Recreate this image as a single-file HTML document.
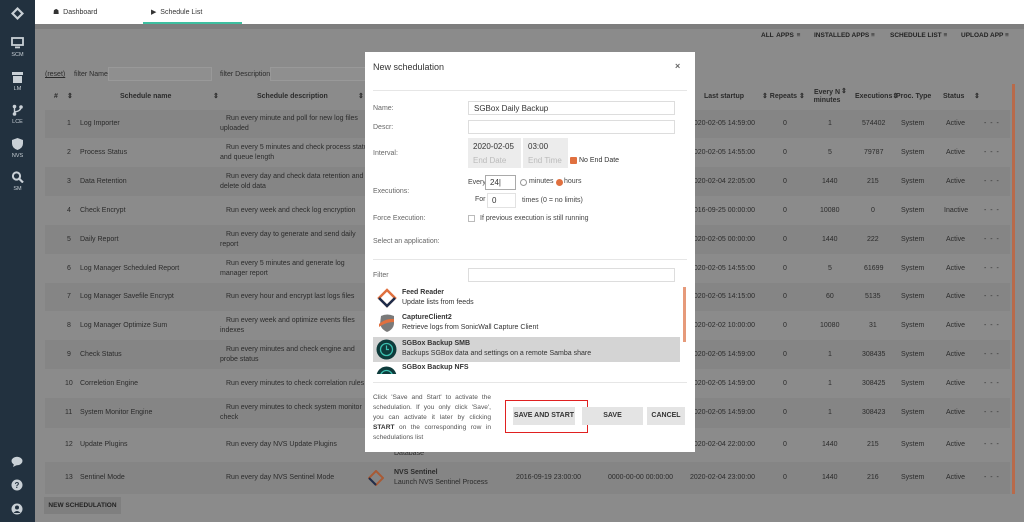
<!DOCTYPE html>
<html><head><meta charset="utf-8"><style>
*{box-sizing:border-box;margin:0;padding:0}
body{width:1024px;height:522px;overflow:hidden;position:relative;font-family:"Liberation Sans",sans-serif;font-size:7px;color:#2b2b2b;background:#8b8b8b}
.a{position:absolute}
.side{left:0;top:0;width:35px;height:522px;background:#22313f}
.si{position:absolute;left:0;width:35px;text-align:center;color:#c9d0d6;font-size:5.5px;line-height:7px}
.top{left:35px;top:0;width:989px;height:24px;background:#fff}
.row{position:absolute;left:45px;width:965px}
.c{position:absolute;top:50%;transform:translateY(-50%);line-height:10px}
.h{font-weight:bold}
.m{background:#fff;left:365px;top:52px;width:330px;height:400px;color:#555}
.lbl{position:absolute;left:8px;font-size:7px;color:#666}
.in{position:absolute;left:103px;width:207px;height:14px;border:1px solid #ddd;background:#fff;font-size:8px;color:#333;padding:2px 5px}
.btn{position:absolute;background:#e4e4e4;font-weight:bold;font-size:7px;color:#333;text-align:center;line-height:18px;height:18px}
</style></head><body>
<div class="a side">
 <svg class="a" style="left:10px;top:6px" width="15" height="15" viewBox="0 0 15 15"><path d="M7.5 1L14 7.5 7.5 14 1 7.5Z" fill="#c9d0d6"/><path d="M7.5 4L11 7.5 7.5 11 4 7.5Z" fill="#22313f"/></svg>
 <div class="si" style="top:37px"><svg width="13" height="12"><rect x="1" y="1" width="11" height="7" fill="none" stroke="#c9d0d6" stroke-width="1.8"/><rect x="4" y="9.5" width="5" height="1.8" fill="#c9d0d6"/></svg><br>SCM</div>
 <div class="si" style="top:71px"><svg width="13" height="12"><rect x="1" y="1" width="11" height="3" fill="#c9d0d6"/><rect x="2" y="5" width="9" height="7" fill="#c9d0d6"/></svg><br>LM</div>
 <div class="si" style="top:104px"><svg width="13" height="12"><circle cx="3.5" cy="2.5" r="1.8" fill="#c9d0d6"/><circle cx="3.5" cy="10" r="1.8" fill="#c9d0d6"/><circle cx="10" cy="3" r="1.8" fill="#c9d0d6"/><path d="M3.5 2.5V10M10 3Q10 7 3.5 8" stroke="#c9d0d6" fill="none" stroke-width="1.4"/></svg><br>LCE</div>
 <div class="si" style="top:138px"><svg width="13" height="12"><path d="M6.5 0L12 2V5.5Q12 10 6.5 12Q1 10 1 5.5V2Z" fill="#c9d0d6"/></svg><br>NVS</div>
 <div class="si" style="top:171px"><svg width="13" height="12"><circle cx="5.5" cy="5" r="3.6" fill="none" stroke="#c9d0d6" stroke-width="2"/><path d="M8 7.5L12 11.5" stroke="#c9d0d6" stroke-width="2.2"/></svg><br>SM</div>
 <svg class="a" style="left:11px;top:456px" width="12" height="11"><ellipse cx="6" cy="5" rx="5.5" ry="4.3" fill="#c9d0d6"/><path d="M3 8L2 11 6 9Z" fill="#c9d0d6"/></svg>
 <svg class="a" style="left:11px;top:479px" width="12" height="12"><circle cx="6" cy="6" r="5.5" fill="#c9d0d6"/><text x="6" y="9" font-size="8" font-weight="bold" text-anchor="middle" fill="#22313f" font-family="Liberation Sans">?</text></svg>
 <svg class="a" style="left:11px;top:503px" width="12" height="12"><circle cx="6" cy="6" r="5.5" fill="#c9d0d6"/><circle cx="6" cy="4.5" r="2" fill="#22313f"/><path d="M2.5 10Q6 6 9.5 10" fill="#22313f"/></svg>
</div>
<div class="a top">
 <div class="a" style="left:18px;top:8px;font-size:7px;color:#333">&#9751; &nbsp;Dashboard</div>
 <div class="a" style="left:116px;top:8px;font-size:7px;color:#333">&#9654; &nbsp;Schedule List</div>
 <div class="a" style="left:108px;top:22px;width:99px;height:2px;background:#3dbfa0"></div>
</div>
<div class="a" style="left:35px;top:24px;width:989px;height:5px;background:#7e7e7e"></div>
<div class="a h" style="top:32px;left:761px;font-size:6.5px;word-spacing:1px;color:#222">ALL APPS &#8801;</div>
<div class="a h" style="top:32px;left:814px;font-size:6.5px;color:#222">INSTALLED APPS &#8801;</div>
<div class="a h" style="top:32px;left:890px;font-size:6.5px;color:#222">SCHEDULE LIST &#8801;</div>
<div class="a h" style="top:32px;left:961px;font-size:6.5px;color:#222">UPLOAD APP &#8801;</div>
<div class="a" style="top:71px;left:45px;text-decoration:underline">(reset)</div>
<div class="a" style="top:71px;left:74px">filter Name</div>
<div class="a" style="top:67px;left:108px;width:104px;height:14px;background:#8f8f8f;border:1px solid #999"></div>
<div class="a" style="top:71px;left:220px">filter Description</div>
<div class="a" style="top:67px;left:270px;width:100px;height:14px;background:#8f8f8f;border:1px solid #999"></div>
<div class="a" style="left:1012px;top:84px;width:3px;height:410px;background:#b86a4a"></div>

<div class="row h" style="top:84px;height:26px">
 <div class="c" style="left:9px">#</div><div class="c" style="left:22px">&#8661;</div>
 <div class="c" style="left:75px">Schedule name</div><div class="c" style="left:168px">&#8661;</div>
 <div class="c" style="left:212px">Schedule description</div><div class="c" style="left:313px">&#8661;</div>
 <div class="c" style="left:659px">Last startup</div><div class="c" style="left:717px">&#8661; Repeats &#8661;</div>
 <div class="c" style="left:767px;text-align:center;width:30px;line-height:8px">Every N<br>minutes</div><div class="c" style="left:796px;top:30%">&#8661;</div>
 <div class="c" style="left:810px">Executions&#8661;</div><div class="c" style="left:851px">Proc. Type</div>
 <div class="c" style="left:898px">Status</div><div class="c" style="left:929px">&#8661;</div>
</div>
<!-- rows -->
<div class="row" style="top:110px;height:28px;background:#858585"><div class="c" style="left:22px">1</div><div class="c" style="left:35px">Log Importer</div><div class="c" style="left:175px;width:155px;text-indent:6px">Run every minute and poll for new log files uploaded</div><div class="c" style="left:645px">2020-02-05 14:59:00</div><div class="c" style="left:738px">0</div><div class="c" style="left:783px">1</div><div class="c" style="left:817px">574402</div><div class="c" style="left:856px">System</div><div class="c" style="left:901px">Active</div><div class="c" style="left:939px">- &nbsp;- &nbsp;-</div></div>
<div class="row" style="top:138px;height:29px"><div class="c" style="left:22px">2</div><div class="c" style="left:35px">Process Status</div><div class="c" style="left:175px;width:155px;text-indent:6px">Run every 5 minutes and check process status and queue length</div><div class="c" style="left:645px">2020-02-05 14:55:00</div><div class="c" style="left:738px">0</div><div class="c" style="left:783px">5</div><div class="c" style="left:819px">79787</div><div class="c" style="left:856px">System</div><div class="c" style="left:901px">Active</div><div class="c" style="left:939px">- &nbsp;- &nbsp;-</div></div>
<div class="row" style="top:167px;height:29px;background:#858585"><div class="c" style="left:22px">3</div><div class="c" style="left:35px">Data Retention</div><div class="c" style="left:175px;width:150px;text-indent:6px">Run every day and check data retention and delete old data</div><div class="c" style="left:645px">2020-02-04 22:05:00</div><div class="c" style="left:738px">0</div><div class="c" style="left:777px">1440</div><div class="c" style="left:822px">215</div><div class="c" style="left:856px">System</div><div class="c" style="left:901px">Active</div><div class="c" style="left:939px">- &nbsp;- &nbsp;-</div></div>
<div class="row" style="top:196px;height:29px"><div class="c" style="left:22px">4</div><div class="c" style="left:35px">Check Encrypt</div><div class="c" style="left:175px;width:150px;text-indent:6px">Run every week and check log encryption</div><div class="c" style="left:645px">2016-09-25 00:00:00</div><div class="c" style="left:738px">0</div><div class="c" style="left:775px">10080</div><div class="c" style="left:826px">0</div><div class="c" style="left:856px">System</div><div class="c" style="left:899px">Inactive</div><div class="c" style="left:939px">- &nbsp;- &nbsp;-</div></div>
<div class="row" style="top:225px;height:29px;background:#858585"><div class="c" style="left:22px">5</div><div class="c" style="left:35px">Daily Report</div><div class="c" style="left:175px;width:145px;text-indent:6px">Run every day to generate and send daily report</div><div class="c" style="left:645px">2020-02-05 00:00:00</div><div class="c" style="left:738px">0</div><div class="c" style="left:777px">1440</div><div class="c" style="left:822px">222</div><div class="c" style="left:856px">System</div><div class="c" style="left:901px">Active</div><div class="c" style="left:939px">- &nbsp;- &nbsp;-</div></div>
<div class="row" style="top:254px;height:29px"><div class="c" style="left:22px">6</div><div class="c" style="left:35px">Log Manager Scheduled Report</div><div class="c" style="left:175px;width:145px;text-indent:6px">Run every 5 minutes and generate log manager report</div><div class="c" style="left:645px">2020-02-05 14:55:00</div><div class="c" style="left:738px">0</div><div class="c" style="left:783px">5</div><div class="c" style="left:819px">61699</div><div class="c" style="left:856px">System</div><div class="c" style="left:901px">Active</div><div class="c" style="left:939px">- &nbsp;- &nbsp;-</div></div>
<div class="row" style="top:283px;height:28px;background:#858585"><div class="c" style="left:22px">7</div><div class="c" style="left:35px">Log Manager Savefile Encrypt</div><div class="c" style="left:175px;width:150px;text-indent:6px">Run every hour and encrypt last logs files</div><div class="c" style="left:645px">2020-02-05 14:15:00</div><div class="c" style="left:738px">0</div><div class="c" style="left:781px">60</div><div class="c" style="left:820px">5135</div><div class="c" style="left:856px">System</div><div class="c" style="left:901px">Active</div><div class="c" style="left:939px">- &nbsp;- &nbsp;-</div></div>
<div class="row" style="top:311px;height:29px"><div class="c" style="left:22px">8</div><div class="c" style="left:35px">Log Manager Optimize Sum</div><div class="c" style="left:175px;width:145px;text-indent:6px">Run every week and optimize events files indexes</div><div class="c" style="left:645px">2020-02-02 10:00:00</div><div class="c" style="left:738px">0</div><div class="c" style="left:775px">10080</div><div class="c" style="left:824px">31</div><div class="c" style="left:856px">System</div><div class="c" style="left:901px">Active</div><div class="c" style="left:939px">- &nbsp;- &nbsp;-</div></div>
<div class="row" style="top:340px;height:29px;background:#858585"><div class="c" style="left:22px">9</div><div class="c" style="left:35px">Check Status</div><div class="c" style="left:175px;width:145px;text-indent:6px">Run every minutes and check engine and probe status</div><div class="c" style="left:645px">2020-02-05 14:59:00</div><div class="c" style="left:738px">0</div><div class="c" style="left:783px">1</div><div class="c" style="left:817px">308435</div><div class="c" style="left:856px">System</div><div class="c" style="left:901px">Active</div><div class="c" style="left:939px">- &nbsp;- &nbsp;-</div></div>
<div class="row" style="top:369px;height:29px"><div class="c" style="left:20px">10</div><div class="c" style="left:35px">Correletion Engine</div><div class="c" style="left:175px;width:150px;text-indent:6px">Run every minutes to check correlation rules</div><div class="c" style="left:645px">2020-02-05 14:59:00</div><div class="c" style="left:738px">0</div><div class="c" style="left:783px">1</div><div class="c" style="left:817px">308425</div><div class="c" style="left:856px">System</div><div class="c" style="left:901px">Active</div><div class="c" style="left:939px">- &nbsp;- &nbsp;-</div></div>
<div class="row" style="top:398px;height:30px;background:#858585"><div class="c" style="left:20px">11</div><div class="c" style="left:35px">System Monitor Engine</div><div class="c" style="left:175px;width:145px;text-indent:6px">Run every minutes to check system monitor check</div><div class="c" style="left:645px">2020-02-05 14:59:00</div><div class="c" style="left:738px">0</div><div class="c" style="left:783px">1</div><div class="c" style="left:817px">308423</div><div class="c" style="left:856px">System</div><div class="c" style="left:901px">Active</div><div class="c" style="left:939px">- &nbsp;- &nbsp;-</div></div>
<div class="row" style="top:428px;height:34px"><div class="c" style="left:20px">12</div><div class="c" style="left:35px">Update Plugins</div><div class="c" style="left:181px">Run every day NVS Update Plugins</div><div class="c" style="left:349px;top:75%">Database</div><div class="c" style="left:645px">2020-02-04 22:00:00</div><div class="c" style="left:738px">0</div><div class="c" style="left:777px">1440</div><div class="c" style="left:822px">215</div><div class="c" style="left:856px">System</div><div class="c" style="left:901px">Active</div><div class="c" style="left:939px">- &nbsp;- &nbsp;-</div></div>
<div class="row" style="top:462px;height:32px;background:#858585"><div class="c" style="left:20px">13</div><div class="c" style="left:35px">Sentinel Mode</div><div class="c" style="left:181px">Run every day NVS Sentinel Mode</div>
 <svg class="c" style="left:323px" width="16" height="16" viewBox="0 0 16 16"><path d="M8 1L15 8 8 15 1 8Z" fill="none" stroke="#a85a35" stroke-width="2"/><path d="M1 8L8 15" stroke="#1f2d4b" stroke-width="2"/></svg>
 <div class="c" style="left:349px"><b>NVS Sentinel</b><br>Launch NVS Sentinel Process</div><div class="c" style="left:471px">2016-09-19 23:00:00</div><div class="c" style="left:563px">0000-00-00 00:00:00</div><div class="c" style="left:645px">2020-02-04 23:00:00</div><div class="c" style="left:738px">0</div><div class="c" style="left:777px">1440</div><div class="c" style="left:822px">216</div><div class="c" style="left:856px">System</div><div class="c" style="left:901px">Active</div><div class="c" style="left:939px">- &nbsp;- &nbsp;-</div></div>
<div class="a h" style="left:44px;top:497px;width:77px;height:17px;background:#7f7f7f;line-height:17px;text-align:center;font-size:6.5px;color:#222">NEW SCHEDULATION</div>

<!-- modal -->
<div class="a m">
 <div class="a" style="left:8px;top:10px;font-size:9px;color:#333">New schedulation</div>
 <div class="a" style="left:310px;top:9px;font-size:9px;color:#666;font-weight:bold">&times;</div>
 <div class="a" style="left:8px;top:38px;width:314px;height:1px;background:#e6e6e6"></div>
 <div class="lbl" style="top:53px">Name:</div><div class="in" style="top:49px">SGBox Daily Backup</div>
 <div class="lbl" style="top:72px">Descr:</div><div class="in" style="top:68px"></div>
 <div class="lbl" style="top:98px">Interval:</div>
 <div class="a" style="left:103px;top:86px;width:53px;height:30px;background:#ececec;font-size:8px;color:#333;padding:2px 5px;line-height:14px">2020-02-05<br><span style="color:#bbb">End Date</span></div>
 <div class="a" style="left:158px;top:86px;width:45px;height:30px;background:#ececec;font-size:8px;color:#333;padding:2px 5px;line-height:14px">03:00<br><span style="color:#bbb">End Time</span></div>
 <div class="a" style="left:205px;top:105px;width:7px;height:7px;background:#e0703f;border-radius:1px"></div>
 <div class="a" style="left:214px;top:105px;font-size:7px;color:#333">No End Date</div>
 <div class="lbl" style="top:136px">Executions:</div>
 <div class="a" style="left:103px;top:127px;font-size:7px;color:#444">Every</div>
 <div class="a" style="left:120px;top:123px;width:31px;height:15px;border:1px solid #aaa;font-size:8px;padding:2px 4px;color:#333">24|</div>
 <div class="a" style="left:155px;top:127px;width:7px;height:7px;border:1px solid #999;border-radius:50%"></div>
 <div class="a" style="left:164px;top:126px;font-size:7px;color:#444">minutes</div>
 <div class="a" style="left:191px;top:127px;width:7px;height:7px;background:#e0703f;border-radius:50%"></div>
 <div class="a" style="left:199px;top:126px;font-size:7px;color:#444">hours</div>
 <div class="a" style="left:110px;top:144px;font-size:7px;color:#444">For</div>
 <div class="a" style="left:122px;top:141px;width:29px;height:15px;border:1px solid #e2e2e2;font-size:8px;padding:2px 4px;color:#333">0</div>
 <div class="a" style="left:157px;top:145px;font-size:7px;color:#444">times (0 = no limits)</div>
 <div class="lbl" style="top:163px">Force Execution:</div>
 <div class="a" style="left:103px;top:163px;width:7px;height:7px;border:1px solid #bbb"></div>
 <div class="a" style="left:115px;top:163px;font-size:7px;color:#444">If previous execution is still running</div>
 <div class="lbl" style="top:186px">Select an application:</div>
 <div class="a" style="left:8px;top:207px;width:314px;height:1px;background:#e6e6e6"></div>
 <div class="lbl" style="top:220px">Filter</div><div class="in" style="top:216px;height:14px"></div>
 <div class="a" style="left:318px;top:235px;width:3px;height:55px;background:#e69a7a"></div>
 <svg class="a" style="left:12px;top:236px" width="20" height="20" viewBox="0 0 20 20"><path d="M10 2L18 10 10 18 2 10Z" fill="none" stroke="#e0703f" stroke-width="2.5"/><path d="M2 10L10 18 18 10" fill="none" stroke="#1f2d4b" stroke-width="2.5"/></svg>
 <div class="a" style="left:37px;top:236px;font-size:7px;color:#333;line-height:10px"><b>Feed Reader</b><br>Update lists from feeds</div>
 <svg class="a" style="left:12px;top:261px" width="20" height="20" viewBox="0 0 20 20"><path d="M4 3Q10 0 17 3V10Q17 16 10 19Q4 16 3 11Z" fill="#7a7a7a"/><path d="M2 11Q9 5 17 6V9Q9 9 2 14Z" fill="#e0703f"/></svg>
 <div class="a" style="left:37px;top:261px;font-size:7px;color:#333;line-height:10px"><b>CaptureClient2</b><br>Retrieve logs from SonicWall Capture Client</div>
 <div class="a" style="left:8px;top:285px;width:307px;height:25px;background:#d4d4d4"></div>
 <svg class="a" style="left:11px;top:287px" width="21" height="21" viewBox="0 0 21 21"><circle cx="10.5" cy="10.5" r="10" fill="#0e3b3b"/><circle cx="10.5" cy="10.5" r="6" fill="none" stroke="#3cc0b0" stroke-width="1.3"/><path d="M10.5 6.5V10.5H13" stroke="#3cc0b0" stroke-width="1.2" fill="none"/></svg>
 <div class="a" style="left:37px;top:287px;font-size:7px;color:#333;line-height:10px"><b>SGBox Backup SMB</b><br>Backups SGBox data and settings on a remote Samba share</div>
 <div class="a" style="left:8px;top:312px;width:307px;height:10px;overflow:hidden">
  <svg class="a" style="left:3px;top:2px" width="21" height="21" viewBox="0 0 21 21"><circle cx="10.5" cy="10.5" r="10" fill="#0e3b3b"/><circle cx="10.5" cy="10.5" r="6" fill="none" stroke="#3cc0b0" stroke-width="1.3"/></svg>
  <div class="a" style="left:29px;top:0;font-size:7px;color:#333"><b>SGBox Backup NFS</b></div>
 </div>
 <div class="a" style="left:8px;top:330px;width:314px;height:1px;background:#e6e6e6"></div>
 <div class="a" style="left:8px;top:341px;width:118px;font-size:6.6px;line-height:10px;text-align:justify;color:#555">Click 'Save and Start' to activate the schedulation. If you only click 'Save', you can activate it later by clicking <b style="color:#333">START</b> on the corresponding row in schedulations list</div>
 <div class="btn" style="left:148px;top:355px;width:62px">SAVE AND START</div>
 <div class="a" style="left:140px;top:348px;width:83px;height:33px;border:1.5px solid #e02020"></div>
 <div class="btn" style="left:217px;top:355px;width:61px">SAVE</div>
 <div class="btn" style="left:282px;top:355px;width:38px">CANCEL</div>
</div>
</body></html>
